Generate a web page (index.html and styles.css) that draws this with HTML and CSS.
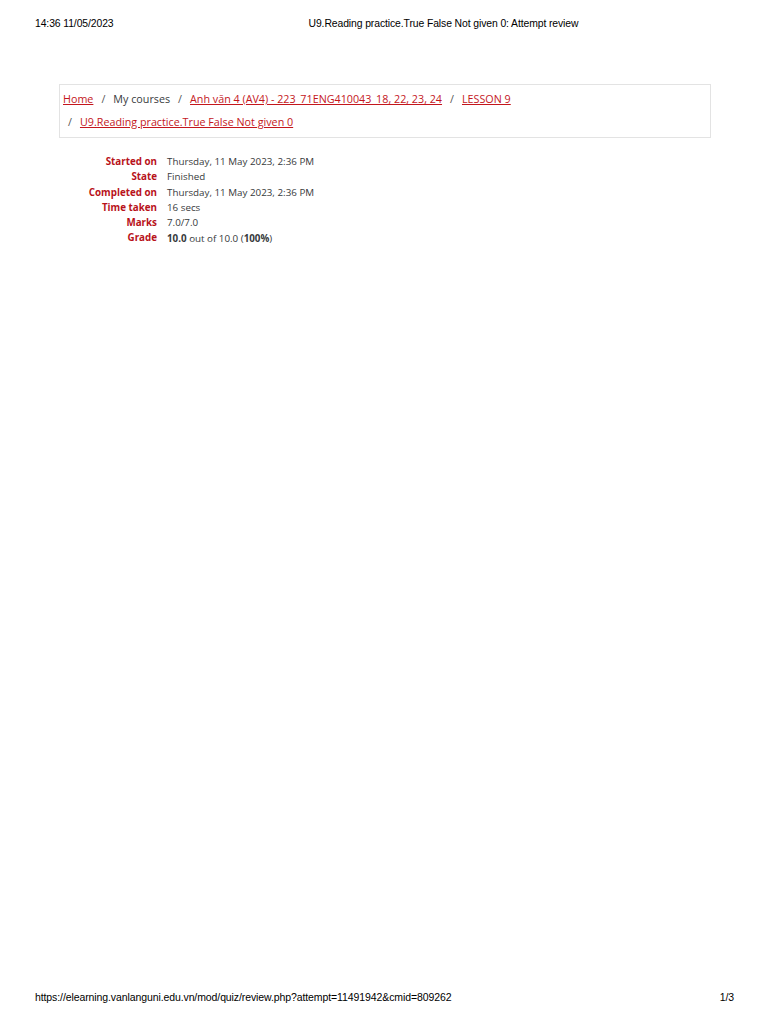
FILE: index.html
```html
<!DOCTYPE html>
<html>
<head>
<meta charset="utf-8">
<link rel="stylesheet" href="styles.css">
</head>
<body>
<div class="page">
  <header class="print-head">
    <span class="ph-date">14:36 11/05/2023</span>
    <span class="ph-title">U9.Reading practice.True False Not given 0: Attempt review</span>
  </header>
  <nav class="crumbs">
    <div class="crumb-row">
      <a class="link" href="#">Home</a><span class="sep">/</span><span class="plain">My courses</span><span class="sep">/</span><a class="link" href="#">Anh văn 4 (AV4) - 223_71ENG410043_18, 22, 23, 24</a><span class="sep">/</span><a class="link" href="#">LESSON 9</a>
    </div>
    <div class="crumb-row">
      <span class="sep first">/</span><a class="link" href="#">U9.Reading practice.True False Not given 0</a>
    </div>
  </nav>
  <table class="summary">
    <tr><th>Started on</th><td>Thursday, 11 May 2023, 2:36 PM</td></tr>
    <tr><th>State</th><td>Finished</td></tr>
    <tr><th>Completed on</th><td>Thursday, 11 May 2023, 2:36 PM</td></tr>
    <tr><th>Time taken</th><td>16 secs</td></tr>
    <tr><th>Marks</th><td>7.0/7.0</td></tr>
    <tr><th>Grade</th><td><b>10.0</b> out of 10.0 (<b>100%</b>)</td></tr>
  </table>
  <div class="spacer"></div>
  <footer class="print-foot">
    <span>https://elearning.vanlanguni.edu.vn/mod/quiz/review.php?attempt=11491942&amp;cmid=809262</span>
    <span>1/3</span>
  </footer>
</div>
</body>
</html>
```
FILE: styles.css
```css
html, body { margin: 0; padding: 0; background: #fff; }
.page {
  width: 768px;
  height: 1024px;
  display: flex;
  flex-direction: column;
  box-sizing: border-box;
  font-family: "Open Sans", "Noto Sans", sans-serif;
  color: #373a3c;
}
.print-head, .print-foot {
  font-family: "Liberation Sans", Arial, sans-serif;
  font-size: 10.4px;
  color: #000;
  letter-spacing: -0.1px;
}
.print-head {
  display: flex;
  padding: 17px 0 0 35px;
  height: 13px;
  line-height: 13px;
}
.ph-title { margin-left: 195px; }
.crumbs {
  margin: 54px 57px 0 59px;
  border: 1px solid #e3e3e3;
  padding: 3px 3px 3px 3px;
  font-size: 10.75px;
}
.crumb-row {
  display: flex;
  align-items: center;
  height: 23px;
  line-height: 23px;
}
.link { color: #c4161c; text-decoration: underline; }
.plain { color: #373a3c; }
.sep { color: #555; margin: 0 8px 0 8px; }
.sep.first { margin-left: 5px; }
.summary {
  margin: 16px 0 0 74px;
  border-collapse: collapse;
  font-size: 9.8px;
}
.summary th {
  text-align: right;
  color: #b8121a;
  font-weight: 700;
  padding: 0 10px 0 0;
  height: 15.3px;
  line-height: 15.3px;
  width: 83px;
  white-space: nowrap;
}
.summary td {
  color: #373a3c;
  padding: 0;
  white-space: nowrap;
}
.summary b { font-weight: 700; }
.spacer { flex: 1; }
.print-foot {
  display: flex;
  justify-content: space-between;
  padding: 0 34px 20px 35px;
  height: 13px;
  line-height: 13px;
  font-size: 10.5px;
}
```
